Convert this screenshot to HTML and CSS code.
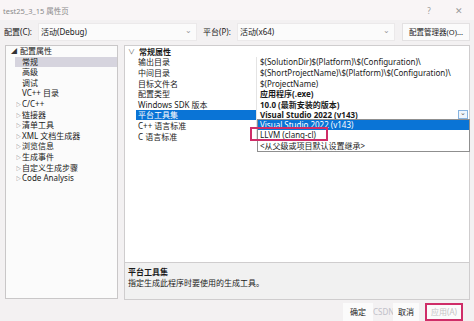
FILE: index.html
```html
<!DOCTYPE html>
<html lang="zh-CN">
<head>
<meta charset="UTF-8">
<title>test25_3_15 属性页</title>
<link rel="stylesheet" href="styles.css">
</head>
<body>
<div class="window">
  <div class="titlebar">
    <span class="title">test25_3_15 属性页</span>
    <span class="tb-btn help">?</span>
    <span class="tb-btn close">✕</span>
  </div>

  <div class="toolbar">
    <span class="tl-label">配置(C):</span>
    <div class="combo combo-config"><span>活动(Debug)</span><span class="chev">⌄</span></div>
    <span class="tl-label plat">平台(P):</span>
    <div class="combo combo-plat"><span>活动(x64)</span><span class="chev">⌄</span></div>
    <div class="btn-manager">配置管理器(O)...</div>
  </div>

  <div class="main">
    <div class="tree">
      <div class="node root"><span class="exp">◢</span>配置属性</div>
      <div class="node leaf selected">常规</div>
      <div class="node leaf">高级</div>
      <div class="node leaf">调试</div>
      <div class="node leaf">VC++ 目录</div>
      <div class="node"><span class="exp">▷</span>C/C++</div>
      <div class="node"><span class="exp">▷</span>链接器</div>
      <div class="node"><span class="exp">▷</span>清单工具</div>
      <div class="node"><span class="exp">▷</span>XML 文档生成器</div>
      <div class="node"><span class="exp">▷</span>浏览信息</div>
      <div class="node"><span class="exp">▷</span>生成事件</div>
      <div class="node"><span class="exp">▷</span>自定义生成步骤</div>
      <div class="node"><span class="exp">▷</span>Code Analysis</div>
    </div>

    <div class="right">
      <div class="grid">
        <div class="group"><span class="gchev">∨</span>常规属性</div>
        <div class="row"><span class="key">输出目录</span><span class="val">$(SolutionDir)$(Platform)\$(Configuration)\</span></div>
        <div class="row"><span class="key">中间目录</span><span class="val">$(ShortProjectName)\$(Platform)\$(Configuration)\</span></div>
        <div class="row"><span class="key">目标文件名</span><span class="val">$(ProjectName)</span></div>
        <div class="row"><span class="key">配置类型</span><span class="val bold">应用程序(.exe)</span></div>
        <div class="row"><span class="key">Windows SDK 版本</span><span class="val bold">10.0 (最新安装的版本)</span></div>
        <div class="row active"><span class="key">平台工具集</span><span class="val bold">Visual Studio 2022 (v143)<span class="dd-btn">⌄</span></span></div>
        <div class="row"><span class="key">C++ 语言标准</span><span class="val"></span></div>
        <div class="row"><span class="key">C 语言标准</span><span class="val"></span></div>

        <div class="dropdown">
          <div class="opt picked">Visual Studio 2022 (v143)</div>
          <div class="opt">LLVM (clang-cl)</div>
          <div class="opt">&lt;从父级或项目默认设置继承&gt;</div>
        </div>
        <div class="mark mark-llvm"></div>
      </div>
      <div class="desc">
        <div class="desc-title">平台工具集</div>
        <div class="desc-text">指定生成此程序时要使用的生成工具。</div>
      </div>
    </div>
  </div>

  <div class="buttons">
    <div class="btn ok">确定</div>
    <div class="watermark">CSDN</div>
    <div class="btn cancel">取消</div>
    <div class="btn apply">应用(A)</div>
  </div>
</div>
</body>
</html>
```

FILE: styles.css
```css
* {
  box-sizing: border-box;
}

body {
  margin: 0;
  background: #f2f0f1;
  font-family: "Noto Sans", "Noto Sans CJK SC", sans-serif;
  font-size: 8px;
  color: #1a1a1a;
}

.window {
  width: 474px;
  height: 321px;
  overflow: hidden;
  background: #f3f1f2;
}

/* title bar */
.titlebar {
  height: 20px;
  display: flex;
  align-items: center;
  padding: 0 0 0 3px;
  background: #f9f5f6;
}

.title {
  flex: 1;
  color: #8a8a8a;
  font-size: 7.5px;
}

.tb-btn {
  color: #9a9a9a;
  font-size: 8px;
  width: 30px;
  text-align: center;
}

.close {
  font-size: 9px;
}

/* config / platform row */
.toolbar {
  height: 19px;
  margin-top: 2px;
  display: flex;
  align-items: center;
  padding-left: 4px;
}

.tl-label {
  width: 34px;
}

.tl-label.plat {
  width: 34px;
  margin-left: 6px;
}

.combo {
  height: 18px;
  background: #fbfbfb;
  border: 1px solid #ebe9ea;
  display: flex;
  align-items: center;
  padding: 0 4px 0 2px;
}

.combo span:first-child {
  flex: 1;
}

.combo .chev {
  color: #999;
  font-size: 8px;
  line-height: 8px;
  margin-top: -4px;
}

.combo-config {
  width: 159px;
}

.combo-plat {
  width: 158px;
}

.btn-manager {
  margin-left: 7px;
  width: 68px;
  height: 18px;
  background: #fbfbfb;
  border: 1px solid #e3e1e2;
  display: flex;
  align-items: center;
  justify-content: center;
  font-size: 7.5px;
}

/* main area */
.main {
  display: flex;
  margin-top: 4px;
  padding-left: 5px;
  height: 255px;
}

.tree {
  width: 113px;
  height: 254px;
  background: #fbfbfb;
  border: 1px solid #c9c7c8;
}

.node {
  height: 10.6px;
  line-height: 10.6px;
  padding-left: 10px;
  display: flex;
  align-items: center;
  white-space: nowrap;
}

.node .exp {
  width: 6px;
  font-size: 5px;
  color: #555;
}

.node.root {
  padding-left: 5px;
}

.node.root .exp {
  width: 9px;
  font-size: 6px;
  color: #333;
}

.node.leaf {
  padding-left: 16px;
}

.node.selected {
  background: #d6d4de;
  margin-left: 9px;
  padding-left: 7px;
}

.right {
  margin-left: 6px;
  width: 346px;
  display: flex;
  flex-direction: column;
}

.grid {
  position: relative;
  height: 218px;
  background: #ffffff;
  border: 1px solid #cfcdce;
}

.group {
  height: 10.6px;
  display: flex;
  align-items: center;
  font-weight: bold;
  padding-left: 3px;
}

.gchev {
  width: 11px;
  color: #666;
  font-weight: normal;
  font-size: 7px;
}

.row {
  height: 10.6px;
  display: flex;
  align-items: center;
  padding-left: 11px;
  white-space: nowrap;
}

.key {
  width: 121px;
  height: 100%;
  display: flex;
  align-items: center;
  padding-left: 2px;
  border-right: 1px solid #e4e4e4;
}

.val {
  flex: 1;
  padding-left: 3px;
  display: flex;
  align-items: center;
  height: 100%;
}

.bold {
  font-weight: bold;
}

.row.active .key {
  background: #0a74d6;
  color: #ffffff;
}

.dd-btn {
  margin-left: auto;
  margin-right: 1px;
  width: 10px;
  height: 9px;
  border: 1px solid #86b3e0;
  background: #eef5fc;
  color: #555;
  font-weight: normal;
  font-size: 7px;
  line-height: 4px;
  text-align: center;
}

.dropdown {
  position: absolute;
  left: 132px;
  top: 73px;
  width: 213px;
  background: #ffffff;
  border: 1px solid #8f8f8f;
}

.opt {
  height: 10.4px;
  line-height: 10.4px;
  padding-left: 2px;
  white-space: nowrap;
}

.opt.picked {
  background: #0a74d6;
  color: #ffffff;
}

.mark {
  position: absolute;
  border: 2px solid #cf2d68;
}

.mark-llvm {
  left: 125px;
  top: 81px;
  width: 78px;
  height: 14px;
}

.desc {
  height: 37px;
  background: #f1f1f1;
  border: 1px solid #cfcdce;
  border-top: none;
  padding: 3px 3px;
}

.desc-title {
  font-weight: bold;
  height: 11px;
  line-height: 11px;
}

.desc-text {
  height: 11px;
  line-height: 11px;
}

/* bottom buttons */
.buttons {
  display: flex;
  justify-content: flex-end;
  align-items: center;
  padding-right: 11px;
  margin-top: 2px;
  height: 19px;
}

.btn {
  height: 18px;
  background: #fbfbfb;
  display: flex;
  align-items: center;
  justify-content: center;
}

.btn.ok {
  width: 30px;
}

.btn.cancel {
  width: 26px;
  margin-right: 6px;
}

.btn.apply {
  width: 38px;
  color: #c4c4c4;
  border: 2px solid #cf2d68;
}

.watermark {
  width: 20px;
  color: #c0c0c8;
  font-size: 8px;
  white-space: nowrap;
  text-align: center;
}
```
